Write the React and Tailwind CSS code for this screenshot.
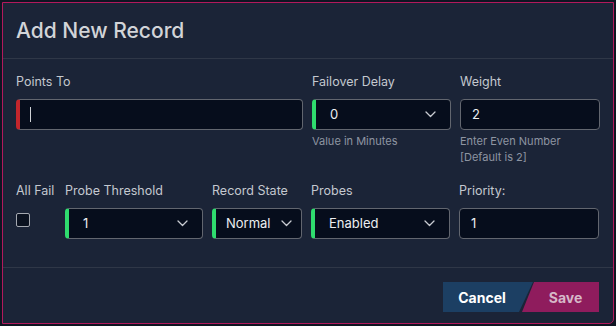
import React from "react";

const Chevron = () => (
  <svg width="11" height="7" viewBox="0 0 11 7" fill="none" className="shrink-0">
    <path d="M1 1l4.5 4.5L10 1" stroke="#c9ccd2" strokeWidth="1.3" strokeLinecap="round" strokeLinejoin="round" />
  </svg>
);

const Field = ({ label, children, help, className = "" }) => (
  <div className={`flex flex-col ${className}`}>
    <label className="text-[12.5px] leading-[18px] text-[#c4c8cf] mb-[8px] whitespace-nowrap">{label}</label>
    {children}
    {help && <div className="mt-[3px] text-[11px] leading-[16px] text-[#8e95a2]">{help}</div>}
  </div>
);

const Select = ({ value, bar = "border-l-[#2fdc6e]", pad = "pl-[14px] pr-[14px]" }) => (
  <div
    className={`h-[31px] flex items-center justify-between bg-[#060d1c] border border-[#62666f] border-l-4 ${bar} rounded-[4px] ${pad} text-[13px] text-[#eceef1]`}
  >
    <span>{value}</span>
    <Chevron />
  </div>
);

const TextInput = ({ value }) => (
  <div className="h-[31px] flex items-center bg-[#060d1c] border border-[#62666f] pl-[11px] rounded-[4px] text-[13px] text-[#eceef1]">
    {value}
  </div>
);

export default function App() {
  return (
    <div className="w-[616px] h-[326px] bg-[#0f1522] p-[2px]" style={{ fontFamily: "Inter, 'Noto Sans', sans-serif" }}>
      <div className="h-[322px] bg-[#1b2437] border border-[#b3195c] rounded-br-[5px] flex flex-col">
        <div className="h-[56px] flex items-center pl-[13px] border-b border-[#2f3747]">
          <h1 className="text-[21px] text-[#d2d4d8] font-medium">Add New Record</h1>
        </div>

        <div className="px-[13px] pt-[14px] pb-[28px] border-b border-[#2f3747]">
          <div className="grid grid-cols-[287px_139px_140px] gap-x-[9px]">
            <Field label="Points To">
              <div className="h-[31px] flex items-center bg-[#060d1c] border border-[#62666f] border-l-4 border-l-[#c3262c] rounded-[4px] pl-[10px]">
                <span className="w-px h-[15px] bg-[#cfd2d7]" />
              </div>
            </Field>
            <Field label="Failover Delay" help="Value in Minutes">
              <Select value="0" />
            </Field>
            <Field
              label="Weight"
              help={
                <>
                  Enter Even Number
                  <br />
                  [Default is 2]
                </>
              }
            >
              <TextInput value="2" />
            </Field>
          </div>

          <div className="grid grid-cols-[40px_138px_90px_139px_140px] gap-x-[9px] mt-[17px]">
            <Field label="All Fail">
              <div className="mt-[5px] w-[14px] h-[14px] border border-[#a5a9b1] rounded-[2px] bg-[#0b1220]" />
            </Field>
            <Field label="Probe Threshold">
              <Select value="1" />
            </Field>
            <Field label="Record State">
              <Select value="Normal" pad="pl-[10px] pr-[9px]" />
            </Field>
            <Field label="Probes">
              <Select value="Enabled" />
            </Field>
            <Field label="Priority:">
              <TextInput value="1" />
            </Field>
          </div>
        </div>

        <div className="flex justify-end pt-[14px] pr-[14px]">
          <button
            className="h-[30px] w-[90px] pr-[12px] bg-[#1c3f63] text-white text-[14px] font-bold"
            style={{ clipPath: "polygon(0 0, 100% 0, calc(100% - 14px) 100%, 0 100%)" }}
          >
            Cancel
          </button>
          <button
            className="h-[30px] w-[77px] -ml-[11px] pl-[10px] bg-[#8f1c5d] text-[#d6b8c8] text-[14px] font-bold"
            style={{ clipPath: "polygon(12px 0, 100% 0, 100% 100%, 0 100%)" }}
          >
            Save
          </button>
        </div>
      </div>
    </div>
  );
}
